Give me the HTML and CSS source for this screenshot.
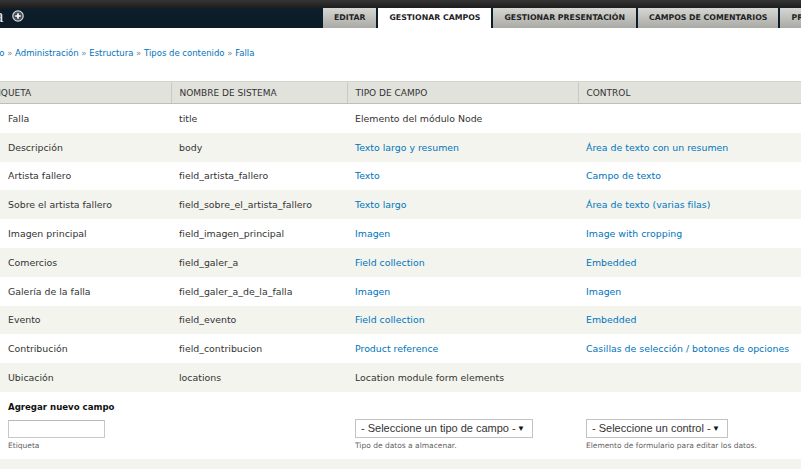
FILE: index.html
```html
<!DOCTYPE html>
<html lang="es">
<head>
<meta charset="utf-8">
<title>Gestionar campos - Falla</title>
<link rel="stylesheet" href="styles.css">
</head>
<body>
<header class="topbar">
  <div class="brand">
    <span class="site-name">a</span>
    <svg class="shortcut" width="12" height="12" viewBox="0 0 12 12" aria-hidden="true">
      <circle cx="6" cy="6" r="5.2" fill="#4a4f55" stroke="#d8d8d8" stroke-width="1.2"/>
      <path d="M6 3.2v5.6M3.2 6h5.6" stroke="#fff" stroke-width="1.6"/>
    </svg>
  </div>
  <ul class="tabs">
    <li class="tab">EDITAR</li>
    <li class="tab active">GESTIONAR CAMPOS</li>
    <li class="tab">GESTIONAR PRESENTACIÓN</li>
    <li class="tab">CAMPOS DE COMENTARIOS</li>
    <li class="tab">PRESENTACIÓN DE COMENTARIOS</li>
  </ul>
</header>

<main class="page">
  <nav class="breadcrumb">
    <a href="#">Inicio</a> <span class="sep">»</span>
    <a href="#">Administración</a> <span class="sep">»</span>
    <a href="#">Estructura</a> <span class="sep">»</span>
    <a href="#">Tipos de contenido</a> <span class="sep">»</span>
    <a href="#">Falla</a>
  </nav>

  <table class="fields">
    <colgroup>
      <col class="c-label">
      <col class="c-name">
      <col class="c-type">
      <col class="c-widget">
    </colgroup>
    <thead>
      <tr>
        <th>Etiqueta</th>
        <th>Nombre de sistema</th>
        <th>Tipo de campo</th>
        <th>Control</th>
      </tr>
    </thead>
    <tbody>
      <tr class="odd"><td>Falla</td><td>title</td><td>Elemento del módulo Node</td><td></td></tr>
      <tr class="even"><td>Descripción</td><td>body</td><td><a href="#">Texto largo y resumen</a></td><td><a href="#">Área de texto con un resumen</a></td></tr>
      <tr class="odd"><td>Artista fallero</td><td>field_artista_fallero</td><td><a href="#">Texto</a></td><td><a href="#">Campo de texto</a></td></tr>
      <tr class="even"><td>Sobre el artista fallero</td><td>field_sobre_el_artista_fallero</td><td><a href="#">Texto largo</a></td><td><a href="#">Área de texto (varias filas)</a></td></tr>
      <tr class="odd"><td>Imagen principal</td><td>field_imagen_principal</td><td><a href="#">Imagen</a></td><td><a href="#">Image with cropping</a></td></tr>
      <tr class="even"><td>Comercios</td><td>field_galer_a</td><td><a href="#">Field collection</a></td><td><a href="#">Embedded</a></td></tr>
      <tr class="odd"><td>Galería de la falla</td><td>field_galer_a_de_la_falla</td><td><a href="#">Imagen</a></td><td><a href="#">Imagen</a></td></tr>
      <tr class="even"><td>Evento</td><td>field_evento</td><td><a href="#">Field collection</a></td><td><a href="#">Embedded</a></td></tr>
      <tr class="odd"><td>Contribución</td><td>field_contribucion</td><td><a href="#">Product reference</a></td><td><a href="#">Casillas de selección / botones de opciones</a></td></tr>
      <tr class="even"><td>Ubicación</td><td>locations</td><td>Location module form elements</td><td></td></tr>
      <tr class="odd add-row">
        <td>
          <div class="add-title">Agregar nuevo campo</div>
          <input class="text-input" type="text" aria-label="Etiqueta">
          <div class="desc">Etiqueta</div>
        </td>
        <td></td>
        <td>
          <div class="select wide"><span>- Seleccione un tipo de campo -</span><span class="arrow">▼</span></div>
          <div class="desc">Tipo de datos a almacenar.</div>
        </td>
        <td>
          <div class="select narrow"><span>- Seleccione un control -</span><span class="arrow">▼</span></div>
          <div class="desc">Elemento de formulario para editar los datos.</div>
        </td>
      </tr>
      <tr class="even"><td></td><td></td><td></td><td></td></tr>
    </tbody>
  </table>
</main>
</body>
</html>
```

FILE: styles.css
```css
html, body {
  margin: 0;
  padding: 0;
  background: #fff;
  overflow: hidden;
}
body {
  width: 801px;
  height: 469px;
  font-family: "DejaVu Sans", Verdana, sans-serif;
  color: #333;
}
a {
  color: #0074bd;
  text-decoration: none;
}

/* top bar */
.topbar {
  display: flex;
  height: 28px;
  background: linear-gradient(to bottom, #353535 0, #1d1d1d 8px, #0c1e2b 9px, #0b1c28 100%);
  overflow: hidden;
}
.brand {
  flex: 0 0 323px;
  display: flex;
  align-items: center;
  gap: 9px;
  padding-top: 4px;
}
.site-name {
  font-family: "Liberation Serif", serif;
  font-size: 19px;
  color: #e6edf2;
  margin-left: -5px;
  line-height: 20px;
}
.shortcut {
  display: block;
}
.tabs {
  display: flex;
  list-style: none;
  margin: 8px 0 0 0;
  padding: 0;
  white-space: nowrap;
}
.tab {
  flex: 0 0 auto;
  height: 20px;
  line-height: 20px;
  padding: 0 11px;
  margin-right: 2px;
  font-size: 7.8px;
  font-weight: bold;
  color: #222;
  background: linear-gradient(to bottom, #d6d6d2, #a9aaa5);
}
.tab.active {
  background: #fff;
}

/* page */
.page {
  margin-left: -21px;
}
.breadcrumb {
  margin: 18px 0 0 3px;
  height: 14px;
  line-height: 14px;
  font-size: 8.5px;
  white-space: nowrap;
}
.breadcrumb .sep {
  color: #7d8b96;
}

/* table */
.fields {
  margin-top: 21px;
  border-collapse: collapse;
  table-layout: fixed;
  width: 840px;
}
.c-label { width: 192px; }
.c-name { width: 176px; }
.c-type { width: 231px; }
.fields th {
  height: 21px;
  padding: 0 8px;
  text-align: left;
  font-weight: normal;
  text-transform: uppercase;
  font-size: 9px;
  color: #333;
  background: #e1e2dc;
  border-top: 1px solid #d3d4ce;
  border-bottom: 1px solid #bebfb9;
  border-left: 1px solid #c9cac4;
  white-space: nowrap;
}
.fields th:first-child {
  border-left: 0;
}
.fields td {
  height: 28.8px;
  padding: 0 8px;
  font-size: 9.4px;
  white-space: nowrap;
  vertical-align: middle;
}
.fields td:first-child {
  padding-left: 29px;
}
.fields tr.odd { background: #fff; }
.fields tr.even { background: #f3f4ee; }

/* add new field row */
.fields .add-row td {
  height: 50px;
  padding-top: 9px;
  padding-bottom: 8px;
  vertical-align: bottom;
}
.add-title {
  font-size: 8.6px;
  font-weight: bold;
  color: #111;
  line-height: 12px;
}
.text-input {
  display: block;
  box-sizing: border-box;
  width: 97px;
  height: 18px;
  margin: 7px 0 0 0;
  padding: 0;
  border: 1px solid #c8c8c8;
  border-top-color: #b8b8b8;
  background: #fff;
}
.desc {
  margin-top: 3px;
  line-height: 10px;
  font-size: 7.5px;
  color: #5f5f5f;
}
.select {
  box-sizing: border-box;
  height: 19px;
  display: flex;
  align-items: center;
  justify-content: space-between;
  padding: 0 7px 0 5px;
  border: 1px solid #c2c2c2;
  background: #fff;
  font-family: "Liberation Sans", Arial, sans-serif;
  font-size: 11px;
  color: #333;
}
.select.wide { width: 178px; }
.select.narrow { width: 142px; }
.select .arrow {
  font-size: 8px;
  color: #111;
}
```
